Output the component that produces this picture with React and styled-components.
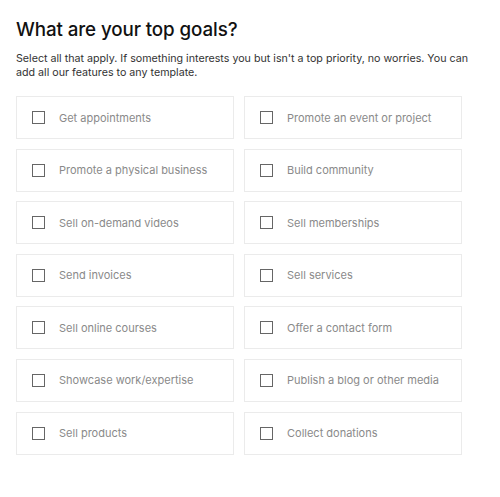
import { useState } from "react";
import styled, { createGlobalStyle } from "styled-components";

const GlobalStyle = createGlobalStyle`
  body {
    margin: 0;
    background: #fff;
    font-family: Inter, "Liberation Sans", sans-serif;
  }
`;

const Page = styled.div`
  padding: 17px 17px 0 16px;
  width: 500px;
  box-sizing: border-box;
`;

const Title = styled.h1`
  margin: 0;
  font-size: 18.8px;
  font-weight: 500;
  line-height: 26px;
  color: #111;
  letter-spacing: -0.1px;
`;

const Intro = styled.p`
  margin: 9px 0 0;
  font-size: 10.7px;
  line-height: 13.5px;
  color: #333;
`;

const Grid = styled.div`
  display: grid;
  grid-template-columns: 218px 218px;
  column-gap: 10px;
  row-gap: 9.6px;
  margin-top: 17px;
`;

const Card = styled.label`
  display: flex;
  align-items: center;
  height: 43px;
  box-sizing: border-box;
  padding-left: 15px;
  border: 1px solid #ebebeb;
  background: #fff;
  cursor: pointer;
  ${(props) => (props.checked ? "border-color: #999;" : "")}
`;

const Box = styled.span`
  width: 13px;
  height: 13px;
  box-sizing: border-box;
  border: 1px solid #666;
  margin-right: 14px;
  flex-shrink: 0;
  background: ${(props) => (props.checked ? "#333" : "#fff")};
`;

const Label = styled.span`
  font-size: 11px;
  color: #8a8a8a;
`;

const goals = [
  "Get appointments",
  "Promote an event or project",
  "Promote a physical business",
  "Build community",
  "Sell on-demand videos",
  "Sell memberships",
  "Send invoices",
  "Sell services",
  "Sell online courses",
  "Offer a contact form",
  "Showcase work/expertise",
  "Publish a blog or other media",
  "Sell products",
  "Collect donations",
];

export default function App() {
  const [selected, setSelected] = useState([]);

  const toggle = (goal) =>
    setSelected((prev) =>
      prev.includes(goal) ? prev.filter((g) => g !== goal) : [...prev, goal]
    );

  return (
    <>
      <GlobalStyle />
      <Page>
        <Title>What are your top goals?</Title>
        <Intro>
          Select all that apply. If something interests you but isn't a top
          priority, no worries. You can add all our features to any template.
        </Intro>
        <Grid>
          {goals.map((goal) => {
            const checked = selected.includes(goal);
            return (
              <Card key={goal} checked={checked} onClick={() => toggle(goal)}>
                <Box checked={checked} />
                <Label>{goal}</Label>
              </Card>
            );
          })}
        </Grid>
      </Page>
    </>
  );
}
